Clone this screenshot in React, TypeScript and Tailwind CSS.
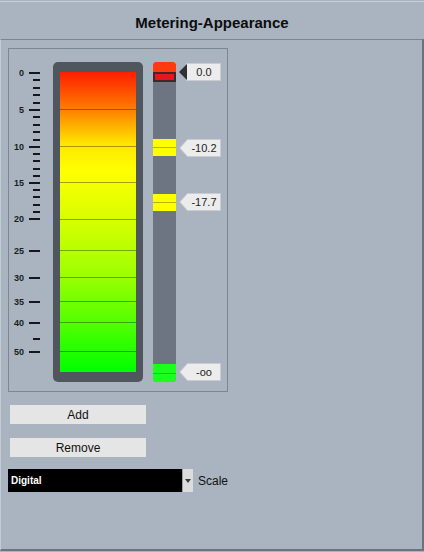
import React from 'react';

// dB -> y (page px) taken from the scale in the reference
const MAJOR: { db: number; y: number; label?: string }[] = [
  { db: 0, y: 72, label: '0' },
  { db: 5, y: 109, label: '5' },
  { db: 10, y: 146, label: '10' },
  { db: 15, y: 182, label: '15' },
  { db: 20, y: 218, label: '20' },
  { db: 25, y: 250, label: '25' },
  { db: 30, y: 277, label: '30' },
  { db: 35, y: 301, label: '35' },
  { db: 40, y: 322, label: '40' },
  { db: 45, y: 338 },
  { db: 50, y: 351, label: '50' },
];

const TOP = 62; // top of the meter row

const minorTicks: number[] = [];
for (let i = 0; i < 4; i++) {
  const a = MAJOR[i].y;
  const b = MAJOR[i + 1].y;
  for (let k = 1; k < 5; k++) minorTicks.push(a + ((b - a) * k) / 5);
}

const GRID = [109, 146, 182, 219, 250, 277, 301, 322, 351];

const LABELS = [
  { text: '0.0', top: 1, dark: true },
  { text: '-10.2', top: 77 },
  { text: '-17.7', top: 131 },
  { text: '-oo', top: 301 },
];

function Tag({ text, top, dark }: { text: string; top: number; dark?: boolean }) {
  return (
    <div className="absolute left-0 w-[42px] h-[18px]" style={{ top }}>
      <svg width="42" height="18" className="absolute inset-0">
        {dark ? (
          <>
            <rect x="7.5" y="0.5" width="34" height="17" fill="#ececec" stroke="#c9cdd2" />
            <polygon points="0,9 8,1 8,17" fill="#2e3236" />
          </>
        ) : (
          <polygon points="0.8,9 8.5,0.5 41.5,0.5 41.5,17.5 8.5,17.5" fill="#ececec" stroke="#c9cdd2" />
        )}
      </svg>
      <span className="absolute left-[8px] right-0 top-0 h-[18px] flex items-center justify-center text-[11px] text-[#222]">
        {text}
      </span>
    </div>
  );
}

export default function App() {
  return (
    <div className="w-[424px] h-[552px] bg-[#a9b4c0] overflow-hidden font-['Liberation_Sans',Arial,sans-serif] text-[#111]">
      <div className="mt-px h-px bg-[#c6ced7]" />
      <div className="h-[37px] flex items-center justify-center pt-[5px]">
        <h1 className="text-[15px] font-bold text-[#0d0d0d]">Metering-Appearance</h1>
      </div>

      <div className="h-[512px] w-[424px] border-t border-t-[#7a8591] border-l border-l-[#c3cbd3] border-r-2 border-r-[#6a7480] border-b-2 border-b-[#6a7480] pt-[8px] pl-[7px]">
        {/* meter box */}
        <div className="w-[220px] h-[344px] border border-[#7c8793] pt-[13px] flex">
          {/* scale */}
          <div className="relative w-[44px] h-[320px]">
            {MAJOR.map((m) => (
              <React.Fragment key={m.db}>
                <div
                  className={`absolute h-[1.5px] bg-[#15181b] ${m.label ? 'left-[20px] w-[11px]' : 'left-[24px] w-[7px]'}`}
                  style={{ top: m.y - TOP }}
                />
                {m.label && (
                  <span
                    className="absolute right-[29px] text-[9px] leading-[9px] font-bold text-[#1a1d20]"
                    style={{ top: m.y - TOP - 3 }}
                  >
                    {m.label}
                  </span>
                )}
              </React.Fragment>
            ))}
            {minorTicks.map((y) => (
              <div
                key={y}
                className="absolute left-[24px] w-[7px] h-[1.5px] bg-[#15181b]"
                style={{ top: Math.round(y) - TOP }}
              />
            ))}
          </div>

          {/* bezel + gradient */}
          <div className="w-[90px] h-[320px] rounded-[5px] bg-[#50565e] px-[7px] py-[10px]">
            <div className="relative w-[76px] h-[300px] bg-[linear-gradient(to_bottom,#ff1e00_0%,#ff7a00_12%,#ffe600_24%,#ffff00_33%,#d8ff00_49%,#9cff00_68%,#55ff00_83%,#00ff00_100%)]">
              {GRID.map((y) => (
                <div key={y} className="absolute left-0 right-0 h-px bg-black/35" style={{ top: y - 72 }} />
              ))}
            </div>
          </div>

          {/* peak column */}
          <div className="relative ml-[10px] w-[23px] h-[320px] rounded-[4px] bg-[#6c7581] overflow-hidden">
            <div className="absolute left-0 right-0 top-0 h-[10px] bg-[#ff3a10]" />
            <div className="absolute left-0 right-0 top-[10px] h-[10px] bg-[#e8161c] border-2 border-[#3b2a2a]" />
            <div className="absolute left-0 right-0 top-[77px] h-[17px] bg-[#ffff00]">
              <div className="mt-[8px] h-px bg-[#b8b400]" />
            </div>
            <div className="absolute left-0 right-0 top-[132px] h-[17px] bg-[#ffff00]">
              <div className="mt-[8px] h-px bg-[#b8b400]" />
            </div>
            <div className="absolute left-0 right-0 top-[302px] h-[18px] bg-[#1cff1c]">
              <div className="mt-[9px] h-px bg-[#2ab82a]" />
            </div>
          </div>

          {/* value tags */}
          <div className="relative ml-[3px] w-[42px] h-[320px]">
            {LABELS.map((l) => (
              <Tag key={l.text} {...l} />
            ))}
          </div>
        </div>

        <div className="ml-[2px] mt-[13px] flex flex-col gap-[14px]">
          <button className="w-[136px] h-[19px] bg-[#e5e5e5] text-[12px] text-[#111] flex items-center justify-center">
            Add
          </button>
          <button className="w-[136px] h-[19px] bg-[#e5e5e5] text-[12px] text-[#111] flex items-center justify-center">
            Remove
          </button>
        </div>

        <div className="mt-[12px] flex items-center">
          <div className="w-[185px] h-[23px] flex bg-black">
            <span className="flex-1 flex items-center pl-[3px] text-[10px] font-bold text-white">Digital</span>
            <div className="w-[11px] h-[23px] bg-[#dcdcdc] border-l border-[#9aa0a6] flex items-center justify-center">
              <svg width="6" height="4" viewBox="0 0 6 4">
                <polygon points="0,0 6,0 3,4" fill="#3a3d40" />
              </svg>
            </div>
          </div>
          <span className="ml-[5px] text-[12px] text-[#111]">Scale</span>
        </div>
      </div>
    </div>
  );
}
